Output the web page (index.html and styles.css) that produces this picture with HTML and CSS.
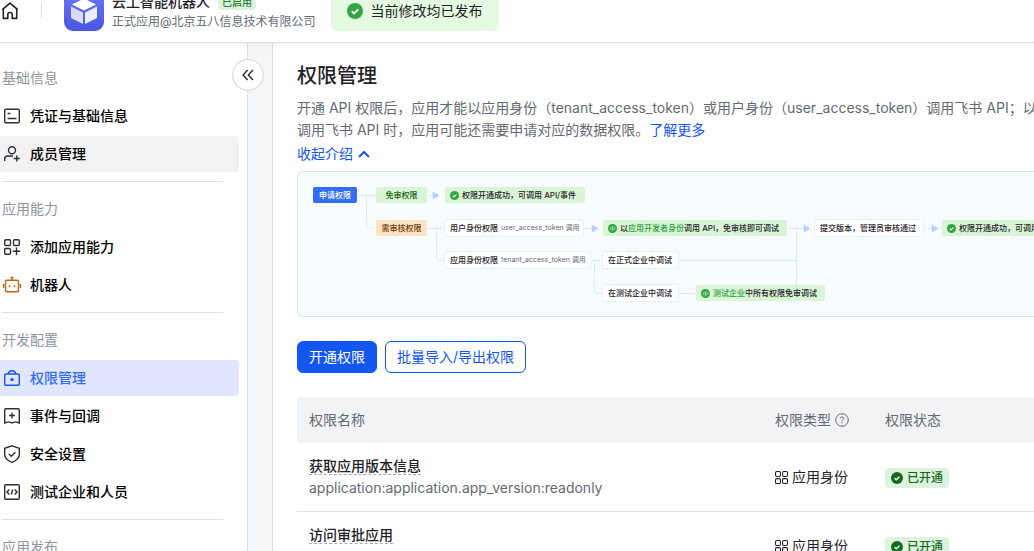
FILE: index.html
```html
<!DOCTYPE html>
<html lang="zh-CN">
<head>
<meta charset="utf-8">
<title>权限管理</title>
<link rel="stylesheet" href="styles.css">
</head>
<body>
<svg class="sprite" aria-hidden="true">
  <symbol id="i-check" viewBox="0 0 16 16"><circle cx="8" cy="8" r="8" fill="currentColor"/><path d="M4.8 8.2l2.3 2.2 4.2-4.1" fill="none" stroke="#fff" stroke-width="1.8"/></symbol>
  <symbol id="i-code" viewBox="0 0 16 16"><circle cx="8" cy="8" r="8" fill="currentColor"/><path d="M6.3 5L3.6 8l2.7 3M9.7 5l2.7 3-2.7 3M8 4.5v7" fill="none" stroke="#d9f5d6" stroke-width="1.3"/></symbol>
  <symbol id="i-apps" viewBox="0 0 12 12"><g fill="none" stroke="currentColor"><rect x=".5" y=".5" width="4.500" height="4.500" rx="1"/><rect x="7" y=".5" width="4.500" height="4.500" rx="1"/><rect x=".5" y="7" width="4.500" height="4.500" rx="1"/><rect x="7" y="7" width="4.500" height="4.500" rx="1"/></g></symbol>
</svg>

<header class="topbar">
  <div class="topbar-row">
    <a class="home" href="#" aria-label="首页"><svg width="18" height="18" viewBox="0 0 18 18" fill="none" stroke="#1f2329" stroke-width="1.6" stroke-linejoin="round"><path d="M1.3 7.6L9 1.2l7.7 6.400"/><path d="M2.300 7v9.400h4.500v-4.200c0-1 .8-1.700 2.200-1.700s2.200.7 2.200 1.700v4.200h4.500V7"/></svg></a>
    <span class="topbar-line"></span>
    <svg class="logo" width="40" height="40" viewBox="0 0 40 40"><defs><linearGradient id="lg" x1="0" y1="0" x2="0" y2="1"><stop offset="0" stop-color="#6b78f0"/><stop offset="1" stop-color="#4a55e2"/></linearGradient></defs><rect width="40" height="40" rx="9" fill="url(#lg)"/><path d="M20 7.500l12 6-12 6-12-6z" fill="#fff"/><path d="M7 15.500l12 6v11.500l-11-5.500q-1-.5-1-1.500z" fill="#d9dcfb"/><path d="M33 15.500l-12 6v11.500l11-5.500q1-.5 1-1.500z" fill="#eceefd"/></svg>
    <div class="app-meta">
      <div class="app-name">云工智能机器人<span class="badge">已启用</span></div>
      <div class="app-org">正式应用@北京五八信息技术有限公司</div>
    </div>
    <div class="notice"><svg width="16" height="16"><use href="#i-check"/></svg>当前修改均已发布</div>
  </div>
</header>

<div class="shell">
  <aside class="sidebar">
    <nav>
      <section class="group">
        <h2>基础信息</h2>
        <a href="#"><svg viewBox="0 0 16 16"><rect x=".7" y="1.200" width="14.600" height="13.600" rx="1.200"/><path d="M3.500 5.500h3M3.500 10.500h9"/></svg>凭证与基础信息</a>
        <a href="#" class="hovered"><svg viewBox="0 0 16 16"><circle cx="8" cy="4.200" r="3.500"/><path d="M.7 15v-2c0-1.800 1.200-3 3-3H9M12.800 9.500v6M9.800 12.500h6"/></svg>成员管理</a>
      </section>
      <section class="group">
        <h2>应用能力</h2>
        <a href="#"><svg viewBox="0 0 16 16"><rect x=".7" y=".7" width="5.800" height="5.800" rx="1.200"/><rect x="9.500" y=".7" width="5.800" height="5.800" rx="1.200"/><rect x=".7" y="9.500" width="5.800" height="5.800" rx="1.200"/><path d="M12.500 8.500v7.500M8.700 12.300h7.500"/></svg>添加应用能力</a>
        <a href="#" class="bot"><svg viewBox="0 0 16 16"><rect x="1.500" y="3.200" width="13" height="11.600" rx="1.500"/><path d="M8 3V.5M6.500.5h3M-.4 7v4M16.400 7v4M5.500 8.200v2M10.500 8.200v2"/></svg>机器人</a>
      </section>
      <section class="group">
        <h2>开发配置</h2>
        <a href="#" class="current" aria-current="page"><svg viewBox="0 0 16 16"><rect x=".7" y="4" width="14.600" height="11.300" rx="1.200"/><path d="M4.200 4c.3-2 1.600-3.300 3.800-3.300S11.500 2 11.800 4"/><circle cx="8" cy="9.600" r="1" fill="currentColor"/></svg>权限管理</a>
        <a href="#"><svg viewBox="0 0 16 16"><path d="M.7 15V2c0-.8.4-1.200 1.200-1.200h12.200c.8 0 1.200.4 1.200 1.200v13l-2.500-.9H10L8 15l-2-.9H3.200zM8 4.500v6M5 7.500h6"/></svg>事件与回调</a>
        <a href="#"><svg viewBox="0 0 16 16"><path d="M8-.2l7.300 2.500v6.200c0 3.700-3.300 6.300-7.300 7.900C4 14.800.7 12.200.7 8.500V2.300zM4.800 8l2.400 2.300 4.200-4.100"/></svg>安全设置</a>
        <a href="#"><svg viewBox="0 0 16 16"><rect x=".7" y=".7" width="14.600" height="14.600" rx="1.200"/><path d="M5.300 5.500L3 8l2.300 2.500M10.700 5.500L13 8l-2.300 2.500M8.700 5.500l-1.400 5"/></svg>测试企业和人员</a>
      </section>
      <section class="group">
        <h2>应用发布</h2>
      </section>
    </nav>
    <button class="collapse" type="button" aria-label="收起侧栏"><svg width="12" height="12" viewBox="0 0 12 12" fill="none" stroke="#1f2329" stroke-width="1.300"><path d="M5.700 1L1 6l4.700 5M11 1L6.300 6 11 11"/></svg></button>
  </aside>

  <main class="content">
    <h1>权限管理</h1>
    <p class="intro">开通 API 权限后，应用才能以应用身份（tenant_access_token）或用户身份（user_access_token）调用飞书 API；以<br>调用飞书 API 时，应用可能还需要申请对应的数据权限。<a href="#">了解更多</a></p>
    <button class="fold" type="button">收起介绍<svg width="12" height="8" viewBox="0 0 12 8" fill="none" stroke="currentColor" stroke-width="2"><path d="M1 7l5-5 5 5"/></svg></button>

    <div class="flow">
      <svg class="wires" width="760" height="144" fill="none" stroke="#d3dffd" stroke-dasharray="2 1">
        <path d="M60 23.500H77M68.500 24V53q0 3 3 3H77M130 23.500h5M130 56.500h15M138.500 57V85q0 3.500 3 3.500h4M287 56.500h7M294 88.500h10M296.500 89V118q0 3.500 3 3.500h4M382 88.500h116M382 121.500h16M490 56.500h16M498.500 57v56M627 56.500h7"/>
        <path d="M135 20l6 3.500-6 3.500zM294 53l6 3.500-6 3.500zM506 53l6 3.500-6 3.500zM634 53l6 3.500-6 3.500z" fill="#b9ccff" stroke="#b9ccff" stroke-dasharray="none" stroke-width=".6"/>
      </svg>
      <span class="node blue n-apply">申请权限</span>
      <span class="node green deep n-free">免审权限</span>
      <span class="node green n-done1"><svg width="9" height="9"><use href="#i-check"/></svg>权限开通成功，可调用 API/事件</span>
      <span class="node orange n-need">需审核权限</span>
      <span class="node white n-user">用户身份权限<small>user_access_token 调用</small></span>
      <span class="node white n-tenant">应用身份权限<small>tenant_access_token 调用</small></span>
      <span class="node green n-dev"><svg width="9" height="9"><use href="#i-code"/></svg>以<em>应用开发者身份</em>调用 API，免审核即可调试</span>
      <span class="node white n-prod">在正式企业中调试</span>
      <span class="node white n-test">在测试企业中调试</span>
      <span class="node green n-all"><svg width="9" height="9"><use href="#i-code"/></svg><em>测试企业</em>中所有权限免审调试</span>
      <span class="node white n-submit">提交版本，管理员审核通过</span>
      <span class="node green n-done2"><svg width="9" height="9"><use href="#i-check"/></svg>权限开通成功，可调用 API/事件</span>
    </div>

    <div class="actions">
      <button class="btn primary" type="button">开通权限</button>
      <button class="btn" type="button">批量导入/导出权限</button>
    </div>

    <table class="perms">
      <colgroup><col><col class="c-type"><col class="c-state"></colgroup>
      <thead>
        <tr><th>权限名称</th><th><span class="inline">权限类型<svg width="14" height="14" viewBox="0 0 14 14" fill="none" stroke="currentColor"><circle cx="7" cy="7" r="6.300"/><path d="M5.200 5.600c0-1 .8-1.700 1.800-1.700s1.800.7 1.800 1.600c0 1.200-1.800 1.300-1.800 2.700M7 9.200v1.200"/></svg></span></th><th>权限状态</th></tr>
      </thead>
      <tbody>
        <tr>
          <td><span class="perm-name">获取应用版本信息</span><div class="perm-code">application:application.app_version:readonly</div></td>
          <td><span class="inline"><svg width="13" height="13"><use href="#i-apps"/></svg>应用身份</span></td>
          <td><span class="state"><svg width="12" height="12"><use href="#i-check"/></svg>已开通</span></td>
        </tr>
        <tr>
          <td><span class="perm-name">访问审批应用</span><div class="perm-code">approval:approval:readonly</div></td>
          <td><span class="inline"><svg width="13" height="13"><use href="#i-apps"/></svg>应用身份</span></td>
          <td><span class="state"><svg width="12" height="12"><use href="#i-check"/></svg>已开通</span></td>
        </tr>
      </tbody>
    </table>
  </main>
</div>
</body>
</html>
```
FILE: styles.css
```css
* { box-sizing: border-box; }
html, body { height: 100%; }
body {
  margin: 0;
  display: flex;
  flex-direction: column;
  overflow: hidden;
  background: #fff;
  color: #1f2329;
  font: 14px/22px Inter, "Noto Sans CJK SC", sans-serif;
}
a { color: inherit; text-decoration: none; }
button { font: inherit; cursor: pointer; }
h1, h2, p { margin: 0; }
svg { flex: none; }
.sprite { position: absolute; width: 0; height: 0; }

.topbar {
  position: relative;
  z-index: 2;
  flex: none;
  padding-bottom: 11px;
  background: #fff;
  border-bottom: 1px solid #dee0e3;
  box-shadow: 0 2px 8px rgba(31, 35, 41, .04);
}
.topbar-row { display: flex; align-items: center; height: 40px; margin-top: -9px; }
.home { display: flex; margin-left: 1px; }
.topbar-line { width: 1px; height: 16px; margin: 0 22px; background: #dee0e3; }
.app-meta { margin-left: 8px; white-space: nowrap; }
.app-name { display: flex; align-items: center; font-weight: 500; }
.badge {
  margin-left: 8px;
  padding: 0 4px;
  border-radius: 4px;
  background: #dcf3dd;
  color: #2b7a33;
  font-size: 10px;
  line-height: 16px;
}
.app-org { color: #646a73; font-size: 12px; line-height: 18px; }
.notice {
  display: flex;
  align-items: center;
  gap: 8px;
  height: 40px;
  margin-left: 15px;
  padding: 0 16px;
  border-radius: 6px;
  background: #e4fae1;
}
.notice svg { color: #32a645; }

.shell { flex: 1; min-height: 0; display: flex; background: #f5f6f7; }
.sidebar {
  position: relative;
  z-index: 1;
  flex: 0 0 248px;
  padding: 8px 8px 0 0;
  background: #fff;
  border-right: 1px solid #dee0e3;
}
.group { padding-top: 16px; }
.group + .group::before {
  content: "";
  display: block;
  height: 1px;
  margin: -7px 16px 16px 2px;
  background: #dee0e3;
}
.group h2 {
  margin: 0 0 9px 2px;
  color: #8f959e;
  font-size: 14px;
  line-height: 22px;
  font-weight: 400;
}
.group a {
  display: flex;
  align-items: center;
  gap: 10px;
  height: 36px;
  margin-bottom: 2px;
  padding-left: 4px;
  border-radius: 0 4px 4px 0;
  color: #000;
  font-weight: 500;
}
.group a:last-child { margin-bottom: 0; }
.group svg {
  width: 16px;
  height: 16px;
  overflow: visible;
  fill: none;
  stroke: #2b2f36;
  stroke-width: 1.4;
}
.group .hovered { background: #f2f2f2; }
.group .bot svg { stroke: #b86414; }
.group .current { background: #e0e6fd; color: #336df4; }
.group .current svg { stroke: #1456f0; }
.collapse {
  position: absolute;
  top: 16px;
  right: -17px;
  display: grid;
  place-items: center;
  width: 32px;
  height: 32px;
  padding: 0;
  border: 1px solid #d0d3d6;
  border-radius: 50%;
  background: #fff;
}

.content {
  flex: 1;
  min-width: 0;
  margin-left: 24px;
  padding: 19px 0 0 24px;
  border-left: 1px solid #dee0e3;
  background: #fff;
  overflow: hidden;
}
h1 { font-size: 20px; line-height: 28px; font-weight: 500; }
.intro { margin-top: 7px; color: #646a73; white-space: nowrap; }
.intro a, .fold { color: #1456f0; }
.fold {
  display: flex;
  align-items: center;
  gap: 5px;
  margin-top: 2px;
  padding: 0;
  border: 0;
  background: none;
}

.flow {
  position: relative;
  height: 146px;
  margin-top: 6px;
  border: 1px solid #dee6ea;
  border-right: 0;
  border-radius: 6px 0 0 6px;
  background: #f7fcff;
  overflow: hidden;
}
.wires { position: absolute; left: 0; top: 0; }
.node {
  position: absolute;
  display: flex;
  align-items: center;
  height: 16px;
  padding: 0 5px;
  border-radius: 2px;
  font-size: 8px;
  line-height: 16px;
  font-weight: 500;
  white-space: nowrap;
}
.node svg { margin-right: 3px; color: #32a645; }
.node em { color: #2ea043; font-style: normal; }
.node small { margin-left: 3px; color: #646a73; font-size: 7px; font-weight: 400; }
.blue { background: #336df4; color: #fff; }
.green { background: #d9f5d6; }
.deep { color: #186010; }
.orange { background: #fee3c7; color: #6b3900; }
.white { height: 18px; border: 1px dotted #d3dffd; border-radius: 3px; background: #fff; }
.n-apply { left: 15px; top: 15px; width: 44px; justify-content: center; }
.n-free { left: 78px; top: 15px; width: 51px; justify-content: center; }
.n-done1 { left: 147px; top: 15px; width: 140px; }
.n-need { left: 78px; top: 48px; width: 51px; justify-content: center; }
.n-user { left: 146px; top: 47px; width: 140px; }
.n-tenant { left: 146px; top: 79px; width: 147px; }
.n-dev { left: 305px; top: 48px; width: 184px; }
.n-prod { left: 304px; top: 79px; width: 77px; }
.n-test { left: 304px; top: 112px; width: 77px; }
.n-all { left: 398px; top: 113px; width: 129px; }
.n-submit { left: 516px; top: 47px; width: 110px; }
.n-done2 { left: 644px; top: 48px; width: 140px; }

.actions { display: flex; gap: 8px; margin-top: 24px; }
.btn {
  height: 32px;
  padding: 0 11px;
  border: 1px solid #1456f0;
  border-radius: 6px;
  background: #fff;
  color: #1456f0;
}
.primary { background: #1456f0; color: #fff; }

.perms {
  width: 100%;
  margin-top: 24px;
  table-layout: fixed;
  border-collapse: separate;
  border-spacing: 0;
}
.c-type { width: 110px; }
.c-state { width: 161px; }
.perms th, .perms td { padding: 12px; text-align: left; }
.perms th { background: #f2f3f5; color: #646a73; font-weight: 400; }
.perms td { border-bottom: 1px solid #dee0e3; white-space: nowrap; }
.inline { display: flex; align-items: center; gap: 4px; }
.perm-name {
  display: inline-block;
  height: 20px;
  border-bottom: 1px dashed #a8adb4;
  font-weight: 500;
  vertical-align: top;
}
.perm-code { color: #646a73; }
.state {
  display: inline-flex;
  align-items: center;
  gap: 4px;
  height: 20px;
  padding: 0 6px;
  border-radius: 4px;
  background: #dcf3dd;
  color: #186a1c;
  font-size: 12px;
  font-weight: 500;
  vertical-align: middle;
}
```
